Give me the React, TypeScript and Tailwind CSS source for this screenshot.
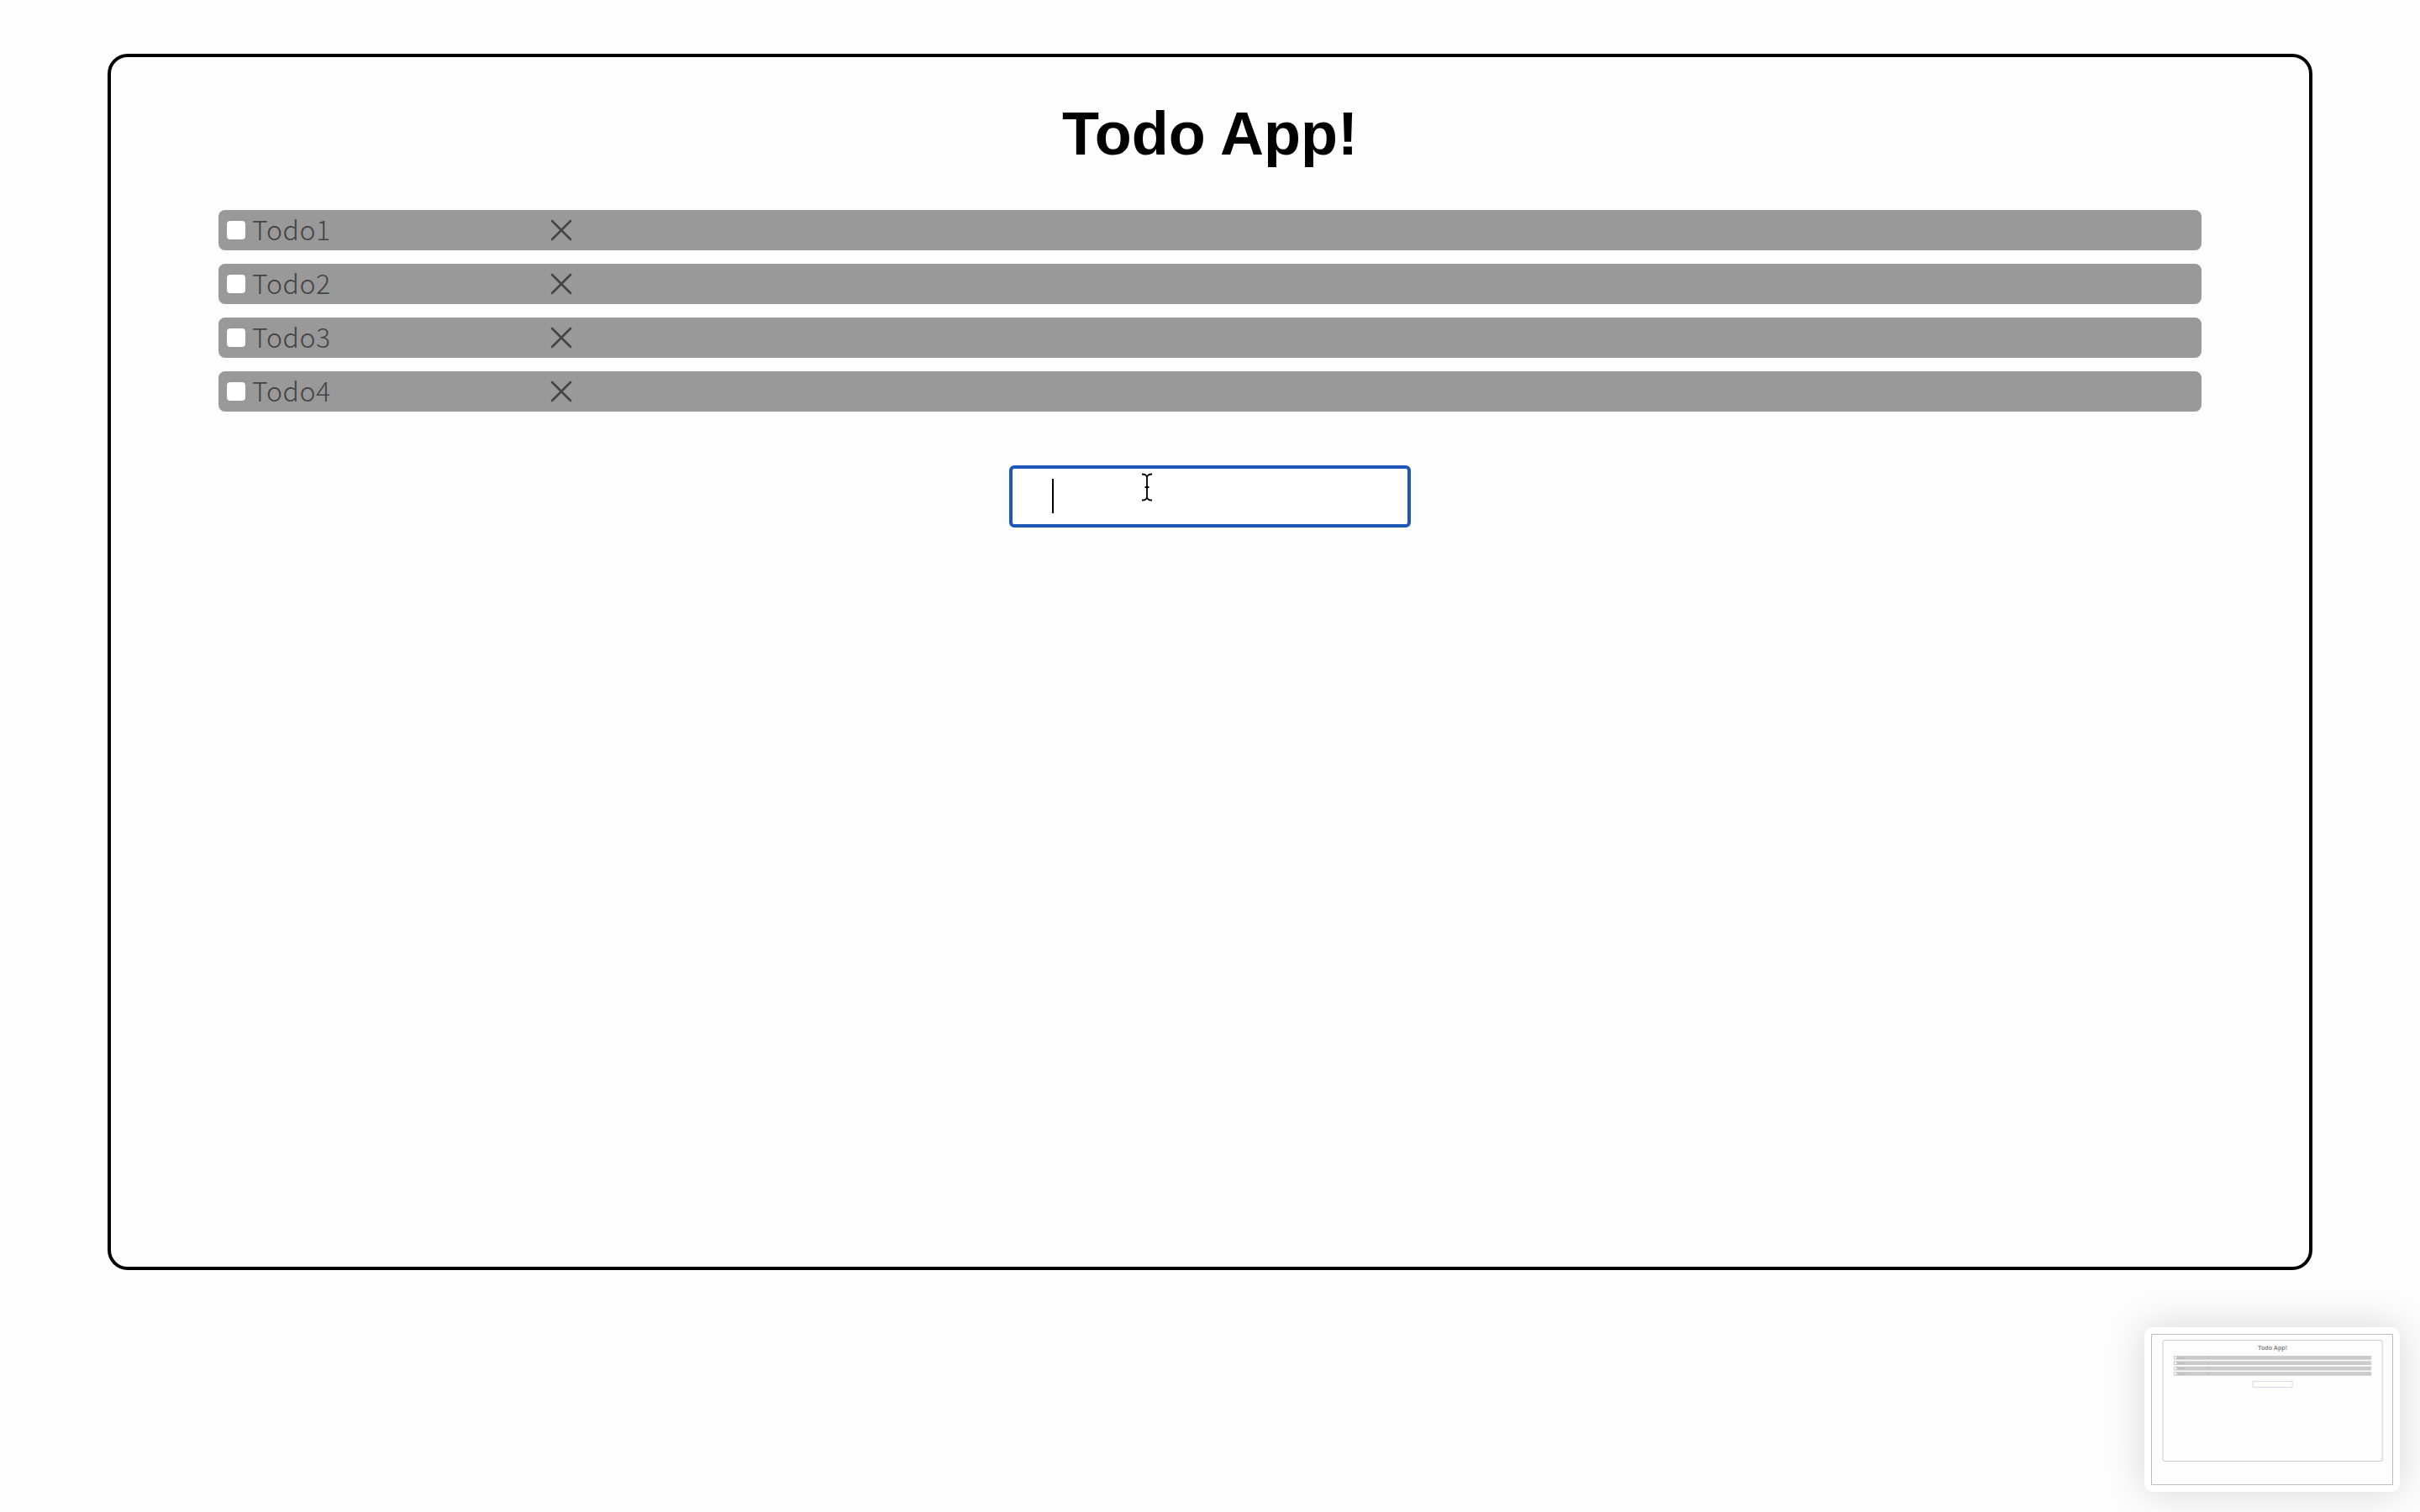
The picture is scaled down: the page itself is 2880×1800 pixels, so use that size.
import { X } from "lucide-react";

const todos = ["Todo1", "Todo2", "Todo3", "Todo4"];

function TodoRow({ label }: { label: string }) {
  return (
    <li className="flex h-[48px] items-center rounded-[8px] bg-[#999999] pl-[10px]">
      <input
        type="checkbox"
        className="m-0 h-[22px] w-[22px] shrink-0 appearance-none rounded-[4px] bg-white"
      />
      <span className="ml-[8px] w-[346px] pb-[4px] font-['Noto_Sans_CJK_JP',sans-serif] text-[32px] font-light leading-none tracking-[0.5px] text-[#444444]">
        {label}
      </span>
      <button className="flex h-[44px] w-[44px] items-center justify-center text-[#444444]">
        <X className="h-[44px] w-[44px]" strokeWidth={1.4} />
      </button>
    </li>
  );
}

function Screen({ live }: { live: boolean }) {
  return (
    <div className="h-[1800px] w-[2880px] bg-[#fdfdfd] pt-[64px] font-['Liberation_Sans',Arial,sans-serif]">
      <div className="mx-[128px] h-[1448px] rounded-[24px] border-4 border-black px-[128px] pt-[55px]">
        <h1 className="text-center text-[72px] font-bold leading-none text-black">Todo App!</h1>

        <ul className="mt-[55px] flex flex-col gap-[16px]">
          {todos.map((t) => (
            <TodoRow key={t} label={t} />
          ))}
        </ul>

        <div className="relative mx-auto mt-[64px] h-[74px] w-[478px]">
          <input
            type="text"
            className="h-full w-full rounded-[6px] border-4 border-[#1d58b8] bg-white px-[47px] text-[29px] caret-transparent outline-none"
          />
          {live && (
            <>
              {/* text caret */}
              <span className="absolute left-[51px] top-[16px] h-[41px] w-[2px] bg-black" />
              {/* mouse I-beam */}
              <svg
                className="absolute left-[157px] top-[9px]"
                width="14"
                height="34"
                viewBox="0 0 14 34"
                fill="none"
                stroke="black"
                strokeWidth="1.8"
              >
                <path d="M1 1.5c3 0 6 1 6 4M13 1.5c-3 0-6 1-6 4M7 5.5v23M1 32.5c3 0 6-1 6-4M13 32.5c-3 0-6-1-6-4M4.5 17h5" />
              </svg>
            </>
          )}
        </div>
      </div>
    </div>
  );
}

export default function App() {
  return (
    <div className="relative h-[1800px] w-[2880px] overflow-hidden bg-[#fdfdfd]">
      <Screen live />

      {/* screenshot preview thumbnail */}
      <div className="absolute left-[2552px] top-[1580px] h-[196px] w-[304px] rounded-[10px] bg-white p-[8px] shadow-[0_0_48px_rgba(0,0,0,0.16)]">
        <div className="h-[180px] w-[288px] overflow-hidden border border-[#bdbdbd]">
          <div className="origin-top-left scale-[0.0997] opacity-50">
            <Screen live={false} />
          </div>
        </div>
      </div>
    </div>
  );
}
